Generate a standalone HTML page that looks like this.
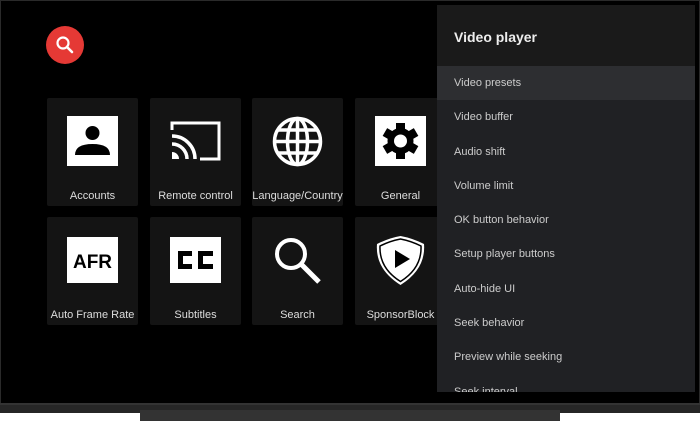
<!DOCTYPE html>
<html><head><meta charset="utf-8"><style>
*{margin:0;padding:0;box-sizing:border-box}
body{width:700px;height:421px;background:#fff;position:relative;overflow:hidden;font-family:"Liberation Sans",sans-serif}
.screen{position:absolute;left:0;top:0;width:700px;height:403px;background:#000;border:1px solid #2a2a2a;border-bottom:none}
.bezel{position:absolute;left:0;top:403px;width:700px;height:10px;background:#262626;border-top:2px solid #333}
.stand{position:absolute;left:140px;top:410px;width:420px;height:11px;background:#333}
.sbtn{position:absolute;left:46px;top:26px;width:38px;height:38px;border-radius:50%;background:#e53935}
.tile{position:absolute;width:91px;height:108px;background:#141414;border-radius:2px}
.tile .lbl{position:absolute;left:0;right:0;top:98px;text-align:center;color:#ddd;font-size:11px;transform:translateY(-50%)}
.tile svg{position:absolute;left:20px;top:18px}
.panel{position:absolute;left:437px;top:5px;width:258px;height:387px;background:#202124;overflow:hidden}
.hdr{height:61px;background:#1a1a1a;color:#eee;font-weight:bold;font-size:14px;padding:24px 0 0 17px}
.sel{background:#2d2e31}
.it{height:34.3px;line-height:34px;color:#ccc;font-size:11px;padding-left:17px}
</style></head><body>
<div class="screen"></div>
<div class="bezel"></div>
<div class="stand"></div>
<div class="sbtn"><svg width="38" height="38" viewBox="0 0 38 38"><circle cx="17" cy="17" r="5.5" fill="none" stroke="#fff" stroke-width="2.2"/><line x1="21" y1="21" x2="26" y2="26" stroke="#fff" stroke-width="2.6" stroke-linecap="round"/></svg></div>

<div class="tile" style="left:47px;top:98px"><svg width="51" height="51" viewBox="0 0 51 51"><rect width="51" height="50" fill="#fff"/><circle cx="25.5" cy="17" r="7" fill="#000"/><path d="M8 39 Q8 28 25.5 28 Q43 28 43 39 Z" fill="#000"/></svg><div class="lbl">Accounts</div></div>
<div class="tile" style="left:150px;top:98px"><svg width="51" height="51" viewBox="0 0 51 51"><path d="M2 14 V7 H49 V43 H30" fill="none" stroke="#fff" stroke-width="3"/><path d="M2 20 A23 23 0 0 1 25 43" fill="none" stroke="#fff" stroke-width="3.5"/><path d="M2 28 A15 15 0 0 1 17 43" fill="none" stroke="#fff" stroke-width="3.5"/><path d="M2 36 A7 7 0 0 1 9 43 H2Z" fill="#fff"/></svg><div class="lbl">Remote control</div></div>
<div class="tile" style="left:252px;top:98px"><svg width="51" height="51" viewBox="0 0 51 51"><g fill="none" stroke="#fff" stroke-width="3.5"><circle cx="25.5" cy="25.5" r="23"/><ellipse cx="25.5" cy="25.5" rx="10" ry="23"/><line x1="25.5" y1="2" x2="25.5" y2="49"/><line x1="2" y1="25.5" x2="49" y2="25.5"/><path d="M6 14 H45 M6 37 H45"/></g></svg><div class="lbl">Language/Country</div></div>
<div class="tile" style="left:355px;top:98px"><svg width="51" height="51" viewBox="0 0 51 51"><rect width="51" height="50" fill="#fff"/><g transform="translate(25.5 25)"><g fill="#000"><circle r="13"/><rect x="-4.5" y="-18" width="9" height="36"/><rect x="-4.5" y="-18" width="9" height="36" transform="rotate(60)"/><rect x="-4.5" y="-18" width="9" height="36" transform="rotate(120)"/></g><circle r="6.5" fill="#fff"/></g></svg><div class="lbl">General</div></div>

<div class="tile" style="left:47px;top:217px"><svg width="51" height="51" viewBox="0 0 51 51"><rect y="2" width="51" height="46" fill="#fff"/><text x="25.5" y="33" text-anchor="middle" font-family="Liberation Sans" font-weight="bold" font-size="19" fill="#000">AFR</text></svg><div class="lbl">Auto Frame Rate</div></div>
<div class="tile" style="left:150px;top:217px"><svg width="51" height="51" viewBox="0 0 51 51"><rect y="2" width="51" height="46" fill="#fff"/><path d="M8 16 H22 V21 H13 V29 H22 V34 H8Z M28 16 H43 V21 H33 V29 H43 V34 H28Z" fill="#000"/></svg><div class="lbl">Subtitles</div></div>
<div class="tile" style="left:252px;top:217px"><svg width="51" height="51" viewBox="0 0 51 51"><circle cx="19" cy="19" r="14" fill="none" stroke="#fff" stroke-width="4"/><line x1="29" y1="29" x2="47" y2="47" stroke="#fff" stroke-width="5"/></svg><div class="lbl">Search</div></div>
<div class="tile" style="left:355px;top:217px"><svg width="51" height="51" viewBox="0 0 51 51"><path d="M25.5 1 Q37 3 49 9 Q51 34 25.5 50 Q0 34 2 9 Q14 3 25.5 1Z" fill="#fff"/><path d="M25.5 4 Q36 6 46 11 Q47 33 25.5 46.5 Q4 33 5 11 Q15 6 25.5 4Z" fill="none" stroke="#000" stroke-width="1.5"/><path d="M20 15 L35 24 L20 33Z" fill="#000"/></svg><div class="lbl">SponsorBlock</div></div>

<div class="panel">
<div class="hdr">Video player</div>
<div class="it sel">Video presets</div>
<div class="it">Video buffer</div>
<div class="it">Audio shift</div>
<div class="it">Volume limit</div>
<div class="it">OK button behavior</div>
<div class="it">Setup player buttons</div>
<div class="it">Auto-hide UI</div>
<div class="it">Seek behavior</div>
<div class="it">Preview while seeking</div>
<div class="it">Seek interval</div>
</div>
</body></html>
